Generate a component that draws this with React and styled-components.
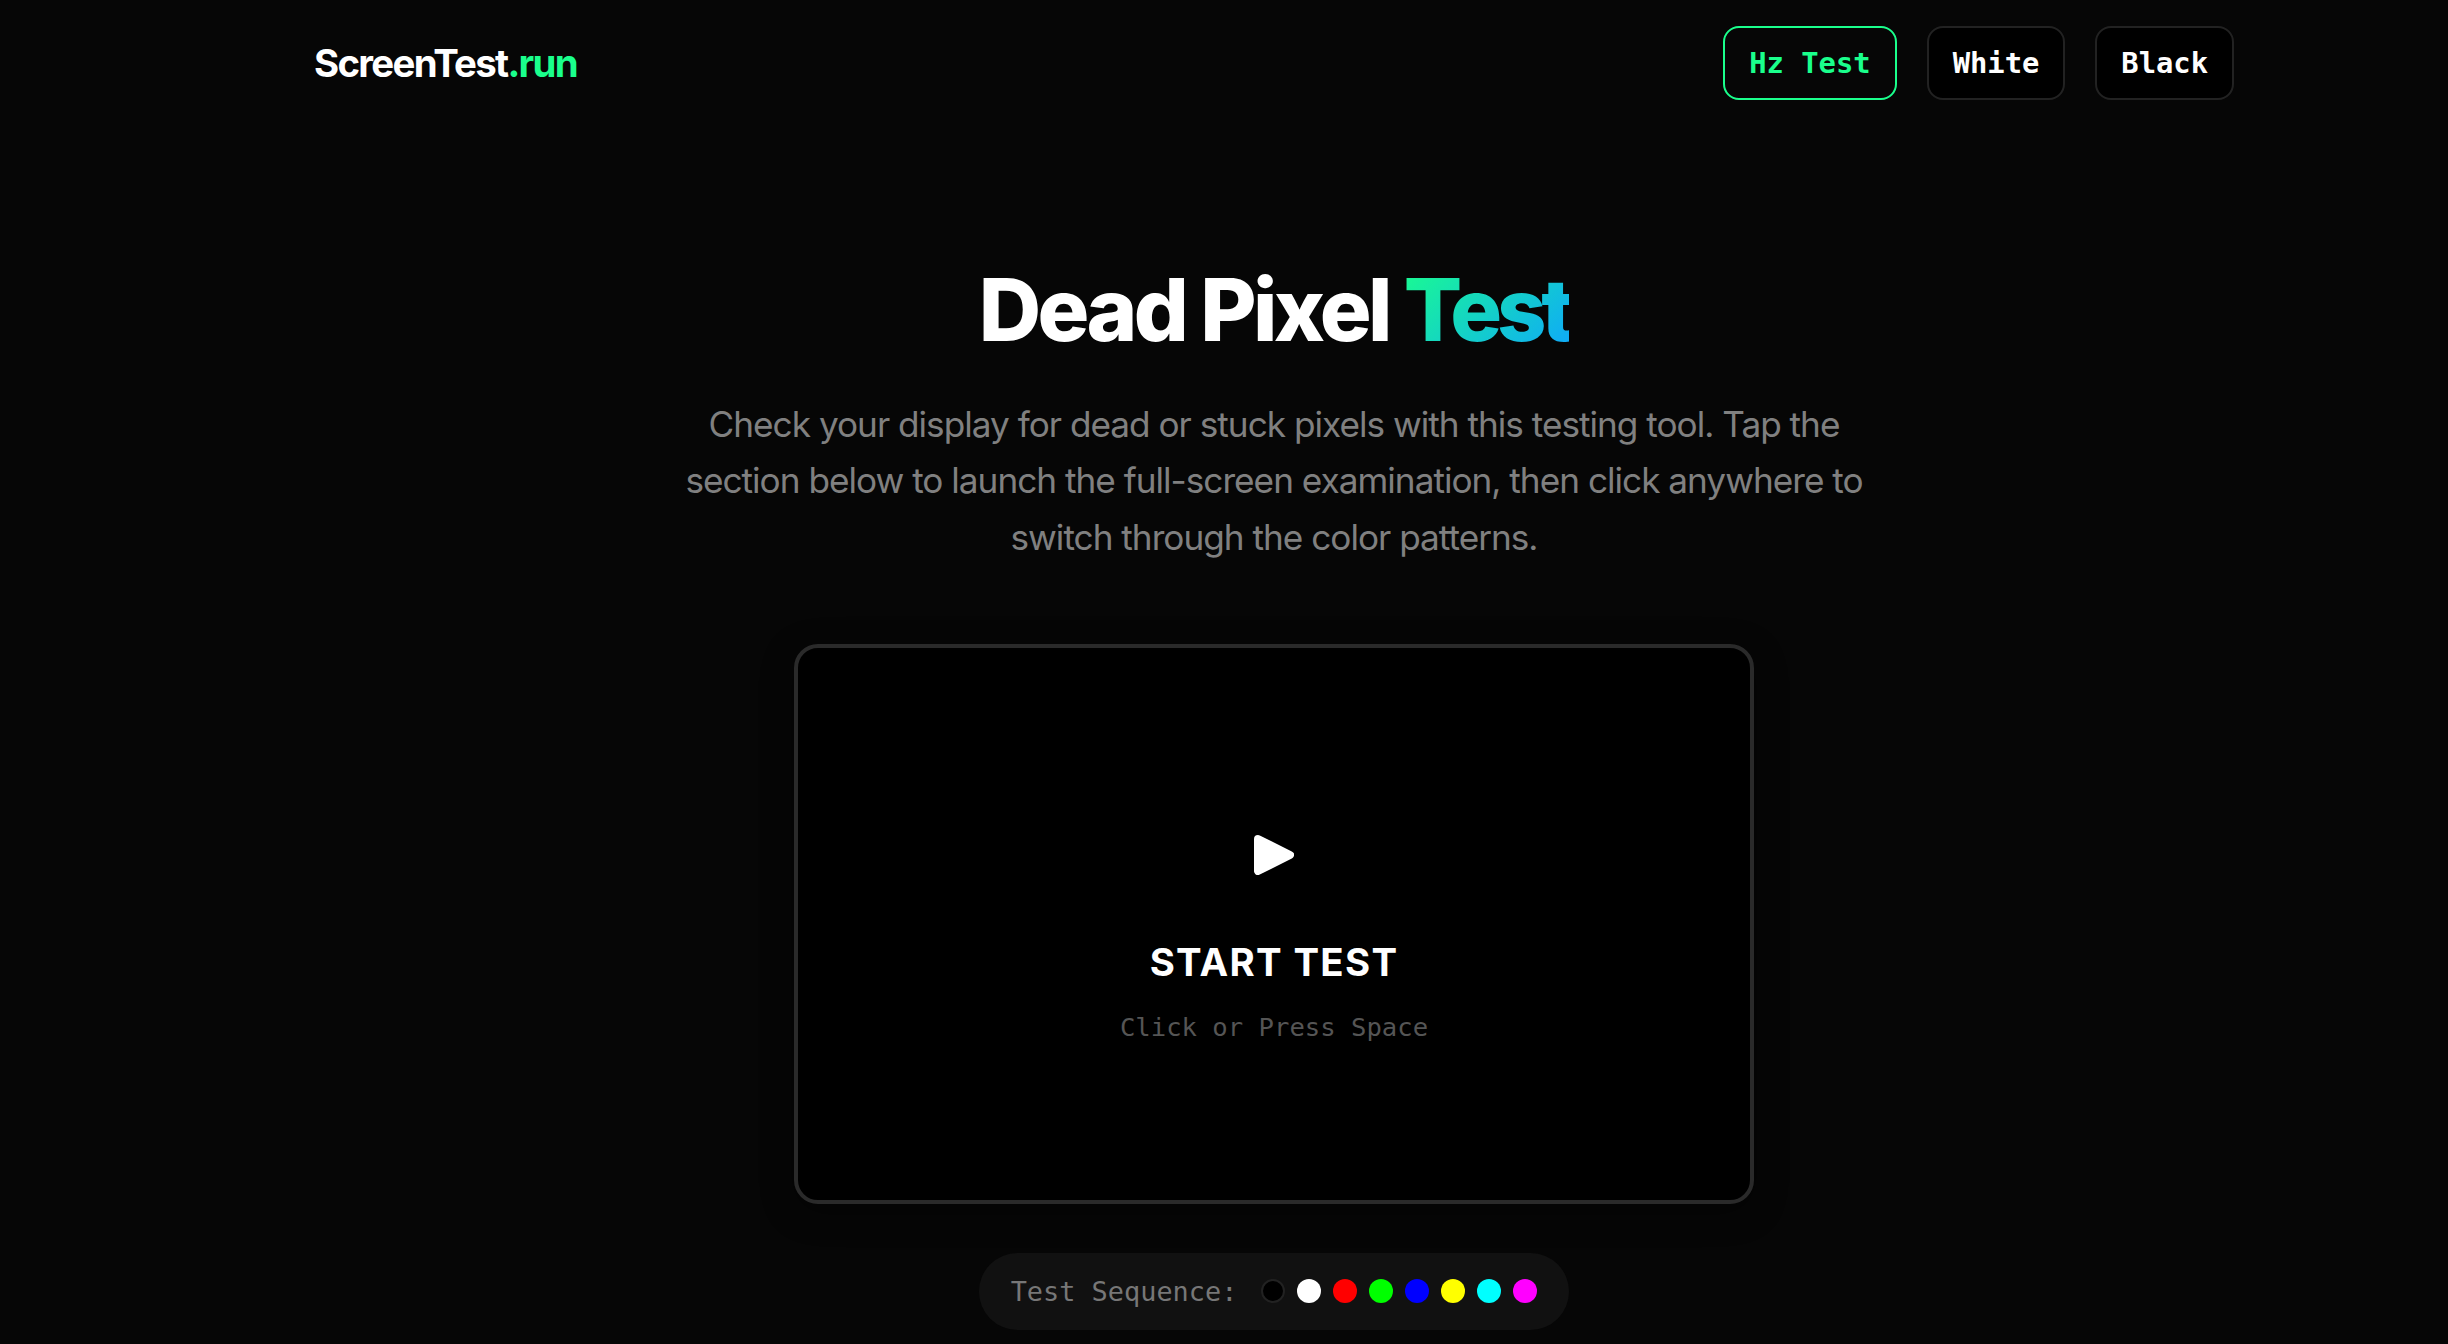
import React from "react";
import styled, { createGlobalStyle } from "styled-components";

const GlobalStyle = createGlobalStyle`
  * {
    box-sizing: border-box;
  }
  html, body {
    margin: 0;
    padding: 0;
    height: 100%;
    overflow: hidden;
    background-color: #060606;
  }
  body {
    font-family: "Inter", "Liberation Sans", sans-serif;
    color: #fff;
  }
`;

const MONO = `"DejaVu Sans Mono", "Liberation Mono", monospace`;

const Page = styled.div`
  min-height: 1344px;
  padding-left: 100px;
  display: flex;
  flex-direction: column;
  align-items: center;
`;

const Header = styled.header`
  width: 1920px;
  height: 126px;
  display: flex;
  align-items: center;
  justify-content: space-between;
`;

const Logo = styled.div`
  font-size: 38.4px;
  font-weight: 700;
  letter-spacing: -1.7px;

  span {
    color: #1aff8c;
  }
`;

const Nav = styled.nav`
  display: flex;
  gap: 30px;
`;

const NavButton = styled.button`
  height: 74px;
  padding: 0 24px;
  font-family: ${MONO};
  font-size: 28.8px;
  font-weight: 700;
  border-radius: 16px;
  background-color: ${(p) => (p.$active ? "transparent" : "#000")};
  color: ${(p) => (p.$active ? "#1aff8c" : "#fff")};
  border: 2px solid ${(p) => (p.$active ? "#1aff8c" : "#222")};
`;

const Main = styled.main`
  display: flex;
  flex-direction: column;
  align-items: center;
`;

const Title = styled.h1`
  margin: 131px 0 0;
  font-size: 86.4px;
  line-height: 106px;
  font-weight: 800;
  letter-spacing: -3.7px;
`;

const Accent = styled.span`
  background: linear-gradient(135deg, #1aff8c, #0ea5ff);
  -webkit-background-clip: text;
  background-clip: text;
  color: transparent;
  letter-spacing: -5.2px;
`;

const Subtitle = styled.p`
  margin: 33px 0 0;
  width: 1200px;
  font-size: 35.2px;
  line-height: 56.3px;
  letter-spacing: -1px;
  text-align: center;
  color: #808080;
`;

const StartCard = styled.div`
  margin-top: 79px;
  width: 960px;
  height: 560px;
  padding-top: 29px;
  display: flex;
  flex-direction: column;
  align-items: center;
  justify-content: center;
  background-color: #000;
  border: 4px solid #2a2a2a;
  border-radius: 24px;
  box-shadow: 0 8px 32px rgba(0, 0, 0, 0.4);
`;

const PlayIcon = styled.svg`
  width: 40px;
  height: 40px;
  display: block;
`;

const StartLabel = styled.div`
  margin-top: 64px;
  font-size: 38.4px;
  font-weight: 700;
  letter-spacing: 1.3px;
`;

const StartHint = styled.div`
  margin-top: 27px;
  font-family: ${MONO};
  font-size: 25.6px;
  color: #555;
`;

const Sequence = styled.div`
  margin-top: 49px;
  height: 77px;
  padding: 0 32px;
  display: flex;
  align-items: center;
  background-color: #111;
  border-radius: 40px;
`;

const SequenceLabel = styled.span`
  margin-right: 24px;
  font-family: ${MONO};
  font-size: 26.9px;
  color: #777;
`;

const Dots = styled.div`
  display: flex;
  gap: 12px;
`;

const Dot = styled.span`
  width: 24px;
  height: 24px;
  border-radius: 50%;
  background-color: ${(p) => p.$color};
  border: ${(p) => (p.$color === "#000" ? "2px solid #222" : "none")};
`;

const COLORS = ["#000", "#fff", "#f00", "#0f0", "#00f", "#ff0", "#0ff", "#f0f"];

export default function App() {
  return (
    <Page>
      <GlobalStyle />
      <Header>
        <Logo>
          ScreenTest<span>.run</span>
        </Logo>
        <Nav>
          <NavButton $active>Hz Test</NavButton>
          <NavButton>White</NavButton>
          <NavButton>Black</NavButton>
        </Nav>
      </Header>
      <Main>
        <Title>
          Dead Pixel <Accent>Test</Accent>
        </Title>
        <Subtitle>
          Check your display for dead or stuck pixels with this testing tool. Tap the section below
          to launch the full-screen examination, then click anywhere to switch through the color
          patterns.
        </Subtitle>
        <StartCard>
          <PlayIcon viewBox="0 0 40 40">
            <polygon
              points="4,4 36,20 4,36"
              fill="#fff"
              stroke="#fff"
              strokeWidth="8"
              strokeLinejoin="round"
            />
          </PlayIcon>
          <StartLabel>START TEST</StartLabel>
          <StartHint>Click or Press Space</StartHint>
        </StartCard>
        <Sequence>
          <SequenceLabel>Test Sequence:</SequenceLabel>
          <Dots>
            {COLORS.map((c) => (
              <Dot key={c} $color={c} />
            ))}
          </Dots>
        </Sequence>
      </Main>
    </Page>
  );
}
